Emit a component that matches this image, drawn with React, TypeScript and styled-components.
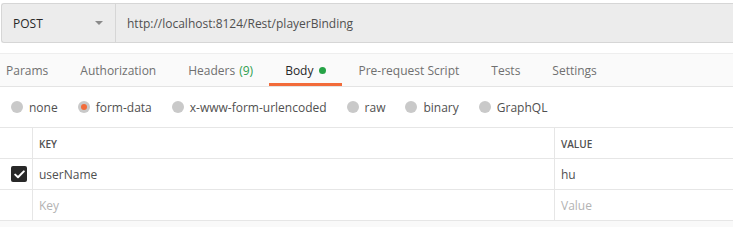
import React from "react";
import styled, { createGlobalStyle } from "styled-components";

const GlobalStyle = createGlobalStyle`
  html, body {
    margin: 0;
    padding: 0;
    background: #ffffff;
  }

  body {
    font-family: "Open Sans", "Liberation Sans", sans-serif;
    font-size: 12px;
    color: #505050;
  }
`;

const Page = styled.div`
  display: flex;
  flex-direction: column;
  width: 733px;
  height: 227px;
  overflow: hidden;
  background: #f9f9f9;
`;

const Top = styled.div`
  background: #ffffff;
  padding-top: 3px;
  padding-left: 1px;
  padding-bottom: 10px;
`;

const UrlBar = styled.div`
  display: flex;
  height: 38px;
  background: #ececec;
  border: 1px solid #d6d6d6;
  border-right: none;
  border-radius: 3px 0 0 3px;
`;

const MethodSelect = styled.div`
  display: flex;
  align-items: center;
  justify-content: space-between;
  width: 114px;
  padding: 0 12px 0 11px;
  box-sizing: border-box;
  border-right: 1px solid #d6d6d6;
  color: #282828;
  font-size: 12px;
`;

const Caret = styled.span`
  width: 0;
  height: 0;
  border-left: 4px solid transparent;
  border-right: 4px solid transparent;
  border-top: 4px solid #8a8a8a;
`;

const UrlText = styled.div`
  display: flex;
  align-items: center;
  padding-left: 11px;
  color: #505050;
  font-size: 12px;
`;

const TabBar = styled.div`
  display: flex;
  height: 32px;
  background: #fafafa;
  border-top: 1px solid #eeeeee;
  border-bottom: 1px solid #e4e4e4;
  margin-left: -10px;
`;

const Tab = styled.div<{ $active?: boolean }>`
  display: flex;
  align-items: center;
  gap: 6px;
  padding: 3px 16px 0;
  color: ${({ $active }) => ($active ? "#282828" : "#707070")};
  border-bottom: 3px solid ${({ $active }) => ($active ? "#f26b3a" : "transparent")};
  font-size: 12px;
`;

const Count = styled.span`
  color: #2e9e4f;
  margin-left: -2px;
`;

const Dot = styled.span`
  width: 7px;
  height: 7px;
  border-radius: 50%;
  background: #26a346;
`;

const RadioRow = styled.div`
  display: flex;
  align-items: center;
  height: 40px;
  padding-left: 11px;
  background: #ffffff;
  gap: 20px;
`;

const RadioItem = styled.label`
  display: flex;
  align-items: center;
  gap: 6px;
  color: #505050;
  font-size: 12px;
`;

const RadioCircle = styled.span<{ $checked?: boolean }>`
  position: relative;
  width: 12px;
  height: 12px;
  border-radius: 50%;
  background: #c9c9c9;

  &::after {
    content: "";
    display: ${({ $checked }) => ($checked ? "block" : "none")};
    position: absolute;
    top: 3px;
    left: 3px;
    width: 6px;
    height: 6px;
    border-radius: 50%;
    background: #f26b3a;
  }
`;

const Table = styled.div`
  display: flex;
  flex-direction: column;
  background: #ffffff;
  border-top: 1px solid #e6e6e6;
`;

const Row = styled.div`
  display: grid;
  grid-template-columns: 32px 522px 1fr;
  height: 30px;
  border-bottom: 1px solid #e6e6e6;
`;

const Cell = styled.div<{ $head?: boolean; $placeholder?: boolean }>`
  display: flex;
  align-items: center;
  padding-left: 6px;
  border-left: 1px solid #e6e6e6;
  font-size: ${({ $head }) => ($head ? "10px" : "12px")};
  font-weight: ${({ $head }) => ($head ? 600 : 400)};
  color: ${({ $placeholder }) => ($placeholder ? "#b3b3b3" : "#505050")};
  padding-top: ${({ $head }) => ($head ? "1px" : "0")};
`;

const CheckCell = styled.div`
  display: flex;
  align-items: center;
  padding-left: 11px;
`;

const CheckBox = styled.span`
  display: flex;
  align-items: center;
  justify-content: center;
  width: 16px;
  height: 16px;
  border-radius: 2px;
  background: #282828;
`;

const radios = [
  { label: "none" },
  { label: "form-data", checked: true },
  { label: "x-www-form-urlencoded" },
  { label: "raw" },
  { label: "binary" },
  { label: "GraphQL" },
];

export default function App() {
  return (
    <Page>
      <GlobalStyle />
      <Top>
        <UrlBar>
          <MethodSelect>
            POST
            <Caret />
          </MethodSelect>
          <UrlText>http://localhost:8124/Rest/playerBinding</UrlText>
        </UrlBar>
      </Top>

      <TabBar>
        <Tab>Params</Tab>
        <Tab>Authorization</Tab>
        <Tab>
          Headers
          <Count>(9)</Count>
        </Tab>
        <Tab $active>
          Body
          <Dot />
        </Tab>
        <Tab>Pre-request Script</Tab>
        <Tab>Tests</Tab>
        <Tab>Settings</Tab>
      </TabBar>

      <RadioRow>
        {radios.map((r) => (
          <RadioItem key={r.label}>
            <RadioCircle $checked={r.checked} />
            {r.label}
          </RadioItem>
        ))}
      </RadioRow>

      <Table>
        <Row>
          <CheckCell />
          <Cell $head>KEY</Cell>
          <Cell $head>VALUE</Cell>
        </Row>
        <Row>
          <CheckCell>
            <CheckBox>
              <svg width="11" height="9" viewBox="0 0 11 9">
                <path
                  d="M1.2 4.6 L4 7.3 L9.8 1.4"
                  fill="none"
                  stroke="#ffffff"
                  strokeWidth="2"
                  strokeLinecap="round"
                  strokeLinejoin="round"
                />
              </svg>
            </CheckBox>
          </CheckCell>
          <Cell>userName</Cell>
          <Cell>hu</Cell>
        </Row>
        <Row>
          <CheckCell />
          <Cell $placeholder>Key</Cell>
          <Cell $placeholder>Value</Cell>
        </Row>
      </Table>
    </Page>
  );
}
